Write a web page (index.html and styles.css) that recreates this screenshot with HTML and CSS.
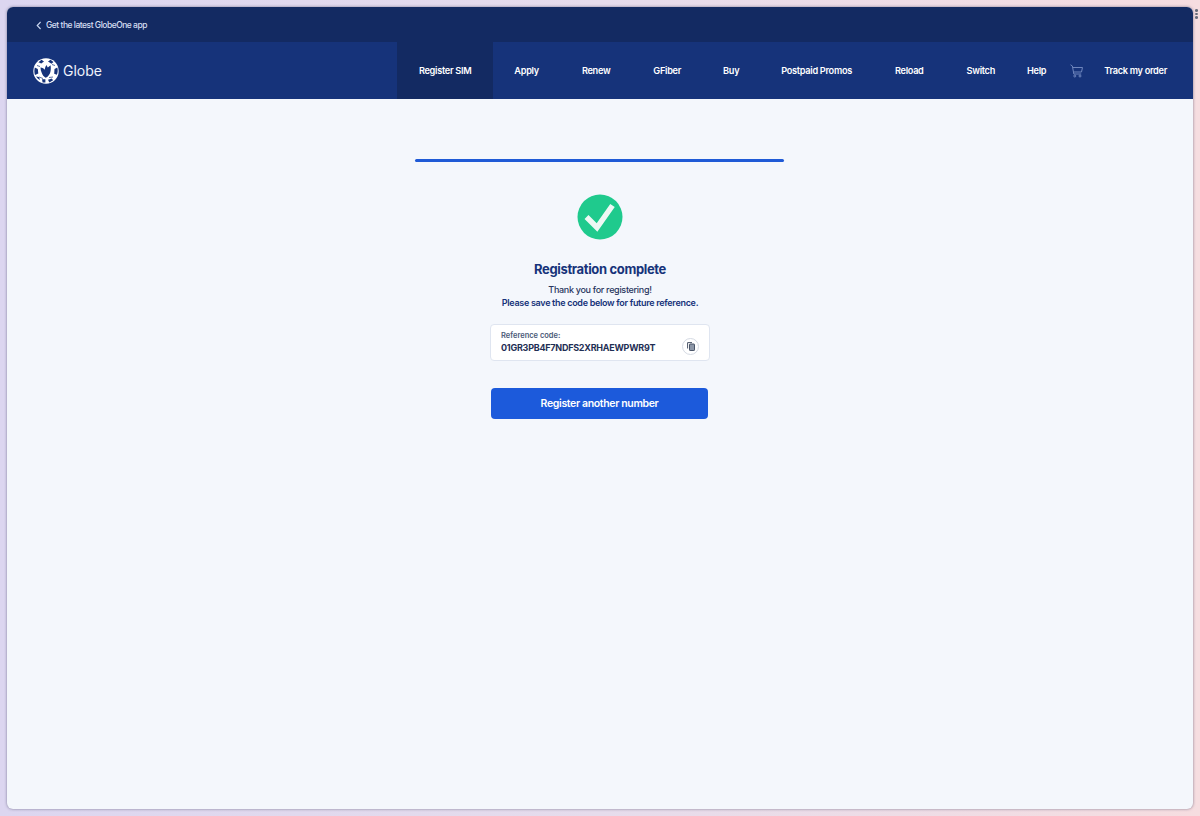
FILE: index.html
```html
<!DOCTYPE html>
<html lang="en">
<head>
    <meta charset="UTF-8">
    <meta name="viewport" content="width=device-width, initial-scale=1.0">
    <title>Globe - Register SIM</title>
    <link rel="stylesheet" href="styles.css">
</head>
<body>
    <div class="window">
        <div class="topbar">
            <svg class="back-icon" width="6" height="9" viewBox="0 0 6 9"><path d="M4.6 1 1.2 4.5l3.4 3.5" fill="none" stroke="#c9d6f0" stroke-width="1.1"/></svg>
            <span>Get the latest GlobeOne app</span>
        </div>

        <!-- Main nav -->
        <div class="navbar">
            <div class="logo">
                <svg width="26" height="26" viewBox="0 0 26 26">
                    <circle cx="13" cy="13" r="12.700" fill="#fff"/>
                    <path d="M7.500 9.500c2 .3 3.500 1 4.300 2.200.2-2 .8-3.400 1.600-4.700l1.400 2.400 2.800-2.200c.5 3.500.2 6.500-1 8.800-1 1.900-2.500 3.200-4 3.800-1.800-1.200-3.200-2.800-3.900-5-.8-1.500-1.200-3.300-1.200-5.300z" fill="#16337a"/>
                    <path d="M1.800 9.500 4.800 11l.5 4.500-3.300 1.500C1.200 14.500 1.200 12 1.800 9.500zM21.500 11l2.800-1.500c.7 2.500.5 5-.4 7.300l-2.700-1zM8.500 1.700 11 3.600 8.300 5.500 5.400 4.300zM15 3.500l2.500-1.800L20.500 4l-2 1.800zM9 21.300h3.400v3.300H9.600zM15 21.800l3.800-1.300 1.300 1.800-3.800 2.300zM3 18.500l3 .5 1 3-2-1.200z" fill="#16337a"/>
                    <path d="M4 7.500l3 1M19 6.500l3 1M6 19l4 1.500M16 19.500l4-.5" stroke="#16337a" stroke-width=".7" fill="none"/>
                </svg>
                <span class="logo-text">Globe</span>
            </div>
            <nav class="nav-links">
                <a class="nav-item active">Register SIM</a>
                <a class="nav-item">Apply</a>
                <a class="nav-item">Renew</a>
                <a class="nav-item">GFiber</a>
                <a class="nav-item tight">Buy</a>
                <a class="nav-item tight">Postpaid Promos</a>
                <a class="nav-item">Reload</a>
                <a class="nav-item">Switch</a>
                <a class="nav-item help">Help</a>
                <svg class="cart" width="13" height="14" viewBox="0 0 13 14" fill="none" stroke="#6f86bd" stroke-width="1"><path d="M.5.8 2.400 2l1.400 8h7.400"/><path d="M2.700 3.500h9.800l-1 4.500H3.500"/><circle cx="4.800" cy="12" r="1"/><circle cx="10" cy="12" r="1"/></svg>
                <a class="nav-item track">Track my order</a>
            </nav>
        </div>

        <!-- Registration result -->
        <main class="content">
            <div class="progress"></div>
            <svg class="check" width="46" height="46" viewBox="0 0 46 46">
                <circle cx="23" cy="23" r="22.500" fill="#1fca8d"/>
                <path d="M9.500 23 20 33.500 35.500 11.500" fill="none" stroke="#eef8f4" stroke-width="5.500"/>
            </svg>
            <h1>Registration complete</h1>
            <p class="thanks">Thank you for registering!</p>
            <p class="save">Please save the code below for future reference.</p>
            <div class="code-card">
                <div>
                    <div class="code-label">Reference code:</div>
                    <div class="code-value">01GR3PB4F7NDFS2XRHAEWPWR9T</div>
                </div>
                <span class="copy">
                    <svg width="8" height="9" viewBox="0 0 8 9" fill="none" stroke="#4a5568" stroke-width="1"><rect x="2.500" y="2" width="5" height="6.500" rx=".6" fill="#8d97a8"/><path d="M.6 6.500V.6h4.400"/></svg>
                </span>
            </div>
            <button class="primary">Register another number</button>
        </main>
    </div>
    <div class="dots"><i></i><i></i><i></i></div>
</body>
</html>
```

FILE: styles.css
```css
* {
    box-sizing: border-box;
}

html, body {
    height: 100%;
}

body {
    margin: 0;
    padding: 7px;
    height: 816px;
    overflow: hidden;
    position: relative;
    font-family: Inter, "Liberation Sans", sans-serif;
    background: linear-gradient(90deg, #dcd6f0 0%, #e6dcec 50%, #f6dde0 100%);
}

.window {
    height: 802px;
    display: flex;
    flex-direction: column;
    background-color: #f4f7fc;
    border-radius: 6px;
    overflow: hidden;
    box-shadow: 0 0 3px rgba(60, 60, 90, 0.6);
}

.topbar {
    height: 35px;
    flex: none;
    display: flex;
    align-items: center;
    gap: 4px;
    padding: 1px 0 0 29px;
    background-color: #132a62;
    color: #d5def2;
    font-size: 8.500px;
    font-weight: 500;
    letter-spacing: -0.5px;
}

.navbar {
    height: 57px;
    flex: none;
    display: flex;
    justify-content: space-between;
    background-color: #16337a;
    color: #fff;
}

.logo {
    display: flex;
    align-items: center;
    gap: 4px;
    padding-left: 26px;
}

.logo-text {
    font-size: 14px;
    color: #eef2fb;
}

.nav-links {
    display: flex;
    align-items: center;
    height: 100%;
    padding-right: 26px;
    font-size: 9.200px;
    font-weight: 600;
    letter-spacing: -0.3px;
}

.nav-item {
    height: 100%;
    display: flex;
    align-items: center;
    padding: 0 21.500px;
    white-space: nowrap;
}

.nav-item.tight {
    padding-left: 20.500px;
}

.nav-item.active {
    background-color: #132a62;
}

.nav-item.help {
    padding: 0 24px 0 10.500px;
}

.nav-item.track {
    padding: 0 0 0 21px;
}

.cart {
    display: block;
}

.content {
    flex: 1;
    display: flex;
    flex-direction: column;
    align-items: center;
    padding-top: 60px;
    color: #16337a;
}

.progress {
    width: 369px;
    height: 3px;
    margin-left: -1px;
    border-radius: 2px;
    background-color: #1f5ad6;
}

.check {
    display: block;
    margin-top: 32px;
}

h1 {
    margin: 20px 0 0;
    font-size: 13px;
    line-height: 18px;
    font-weight: 700;
    letter-spacing: -0.35px;
}

.thanks, .save {
    margin: 0;
    font-size: 9px;
    line-height: 12px;
    font-weight: 500;
    letter-spacing: -0.3px;
}

.thanks {
    margin-top: 6px;
    color: #27355c;
}

.save {
    margin-top: 1px;
    font-weight: 600;
}

.code-card {
    width: 220px;
    height: 37px;
    margin-top: 15px;
    padding: 0 10px 2px;
    display: flex;
    align-items: center;
    justify-content: space-between;
    background: #fff;
    border: 1px solid #dfe5f0;
    border-radius: 4px;
}

.code-label {
    font-size: 7.500px;
    line-height: 11px;
    font-weight: 600;
    color: #4a5a78;
}

.code-value {
    font-size: 9px;
    line-height: 13px;
    font-weight: 700;
    color: #1f2f55;
    letter-spacing: -0.25px;
}

.copy {
    width: 17px;
    height: 17px;
    margin-top: 9px;
    display: flex;
    align-items: center;
    justify-content: center;
    border: 1px solid #d5dae3;
    border-radius: 50%;
}

.primary {
    width: 217px;
    height: 31px;
    margin-top: 27px;
    margin-left: -1px;
    border: none;
    border-radius: 4px;
    background-color: #1c5adb;
    color: #fff;
    font-family: inherit;
    font-size: 10.500px;
    font-weight: 600;
    letter-spacing: -0.35px;
}

/* little handle of the browser window, sits over the backdrop */
.dots {
    position: absolute;
    top: 9px;
    right: 2px;
    display: flex;
    flex-direction: column;
    gap: 1px;
}

.dots i {
    width: 3px;
    height: 2.500px;
    border-radius: 50%;
    background-color: #666a78;
}
```
